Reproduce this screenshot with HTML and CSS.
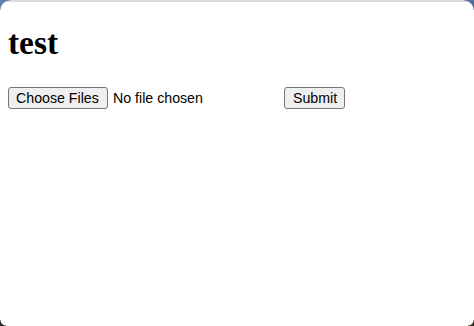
FILE: index.html
```html
<!DOCTYPE html>
<html lang="en">
<head>
<meta charset="utf-8">
<title>test</title>
<link rel="stylesheet" href="styles.css">
</head>
<body>
<div class="window">
  <div class="topline"></div>
  <div class="content">
    <h1 class="title">test</h1>
    <form class="upload-form">
      <div class="file-field">
        <button type="button" class="btn file-btn">Choose Files</button>
        <span class="file-status">No file chosen</span>
      </div>
      <button type="submit" class="btn submit-btn">Submit</button>
    </form>
  </div>
  <span class="corner corner-tl"></span>
  <span class="corner corner-tr"></span>
  <span class="corner corner-bl"></span>
  <span class="corner corner-br"></span>
</div>
</body>
</html>
```

FILE: styles.css
```css
html, body {
  margin: 0;
  padding: 0;
  background: #ffffff;
}

.window {
  position: relative;
  width: 474px;
  height: 326px;
  overflow: hidden;
  background: #ffffff;
}

.topline {
  height: 2px;
  background: #d9d9d9;
}

.content {
  padding: 22px 8px 0 8px;
}

.title {
  margin: 0;
  font-family: "Liberation Serif", "Times New Roman", serif;
  font-weight: bold;
  font-size: 33.4px;
  line-height: 38px;
  color: #000;
}

.upload-form {
  display: flex;
  align-items: center;
  margin-top: 25px;
  font-family: "Liberation Sans", Arial, sans-serif;
  font-size: 14.2px;
}

.file-field {
  display: flex;
  align-items: center;
  width: 276px;
  gap: 5px;
}

.btn {
  box-sizing: border-box;
  height: 22px;
  margin: 0;
  font-family: "Liberation Sans", Arial, sans-serif;
  font-size: 14.2px;
  line-height: 20px;
  color: #000;
  background: #efefef;
  border: 1px solid #767676;
  border-radius: 3px;
}

.file-btn {
  width: 100px;
  padding: 0 0 0 7px;
  text-align: left;
}

.file-status {
  color: #000;
  white-space: nowrap;
}

.submit-btn {
  width: 61px;
  padding: 0 0 0 8px;
  text-align: left;
}

.corner {
  position: absolute;
  width: 10px;
  height: 10px;
}

.corner-tl {
  top: 0;
  left: 0;
  background: radial-gradient(circle at 100% 100%, transparent 9px, #5f7fb0 10px);
}

.corner-tr {
  top: 0;
  right: 0;
  background: radial-gradient(circle at 0 100%, transparent 9px, #4f6f9f 10px);
}

.corner-bl {
  bottom: 0;
  left: 0;
  width: 6px;
  height: 6px;
  background: radial-gradient(circle at 100% 0, transparent 5px, #2a2a22 6px);
}

.corner-br {
  bottom: 0;
  right: 0;
  width: 6px;
  height: 6px;
  background: radial-gradient(circle at 0 0, transparent 5px, #3a2e22 6px);
}
```
